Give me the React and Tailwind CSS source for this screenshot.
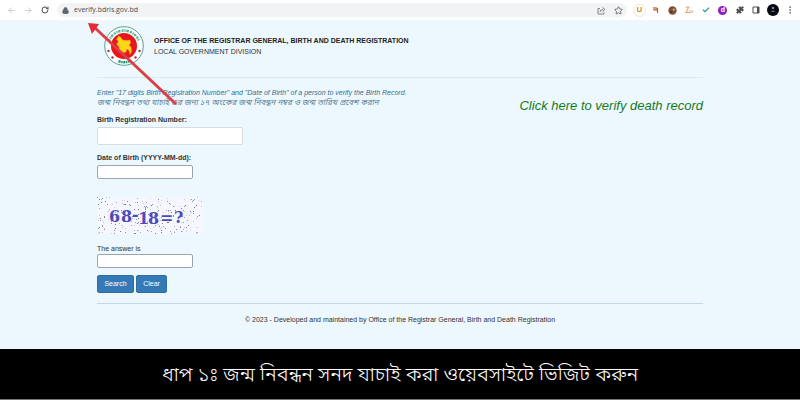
import React from "react";
import { ArrowLeft, ArrowRight, RotateCw, Lock, Star, Puzzle, EllipsisVertical, Check } from "lucide-react";

const specks = Array.from({ length: 230 }, (_, i) => {
  const x = (i * 37 + ((i * i * 13) % 29)) % 105;
  const y = (i * 17 + ((i * i * 7) % 23)) % 37;
  return { x, y, color: ["#8f88c4", "#cdbcd6", "#a5a1b5", "#dcc3d0", "#77718f"][i % 5] };
});

function Extensions() {
  return (
    <div className="grid w-[169px] shrink-0 grid-cols-10 items-center justify-items-center pr-[2px]">
      <button aria-label="Extension U" className="flex size-[13px] items-center justify-center rounded-full border border-[#f6e3d6] bg-white text-[8px] font-bold text-[#d9822b]">U</button>
      <button aria-label="Honey">
        <svg viewBox="0 0 8 8" className="size-2"><path d="M2 1V4H5M4 1V4M5.500 2V7" stroke="#b5632e" strokeWidth="1.200" fill="none" /></svg>
      </button>
      <button aria-label="Cookies">
        <svg viewBox="0 0 10 10" className="size-[9px]"><circle cx="5" cy="5" r="4.600" fill="#7d4f38" /><circle cx="6.500" cy="4" r="1.300" fill="#d4a184" /><circle cx="3.500" cy="6.500" r="1" fill="#4c2d20" /></svg>
      </button>
      <button aria-label="Analytics">
        <svg viewBox="0 0 10 10" className="size-2"><path d="M1 1.500H4.500L1.500 8H5" stroke="#ee9c4a" strokeWidth="1.300" fill="none" /><path d="M6 5V9L9 6V9" stroke="#c7a88c" fill="none" /></svg>
      </button>
      <button aria-label="Checker"><Check className="size-2 text-[#3aa59b]" strokeWidth={4} /></button>
      <button aria-label="Extension d" className="flex size-[9px] items-center justify-center rounded-full bg-[#8b1fc0] text-[7px] font-bold text-white">d</button>
      <button aria-label="Extensions"><Puzzle className="size-2 text-[#4b4f54]" fill="#4b4f54" strokeWidth={2} /></button>
      <button aria-label="Side panel">
        <svg viewBox="0 0 8 8" className="size-2"><path d="M1 1H7V7H1Z" stroke="#4b4f54" fill="none" /><path d="M5 1H7V7H5Z" fill="#4b4f54" /></svg>
      </button>
      <button aria-label="Profile">
        <svg viewBox="0 0 12 12" className="size-3"><circle cx="6" cy="6" r="6" fill="#06080d" /><circle cx="6" cy="4" r="1.300" fill="#7786a4" /><path d="M3.500 8q2.500-3 5 0z" fill="#59677f" /></svg>
      </button>
      <button aria-label="Menu"><EllipsisVertical className="size-[10px] text-[#5f6368]" strokeWidth={2} /></button>
    </div>
  );
}

function BrowserBar() {
  return (
    <header className="flex h-5 items-center bg-white pl-[7px]">
      <nav className="flex w-[50px] shrink-0 items-center gap-2">
        <button aria-label="Back"><ArrowLeft className="size-[9px] text-[#b9bcc0]" /></button>
        <button aria-label="Forward"><ArrowRight className="size-[9px] text-[#b9bcc0]" /></button>
        <button aria-label="Reload"><RotateCw className="size-[8px] text-[#4b4f54]" strokeWidth={3} /></button>
      </nav>
      <div className="mr-1 flex h-[14px] flex-1 items-center rounded-full bg-[#f1f3f4] pr-1 pl-[5px]">
        <Lock className="size-[7px] text-[#5f6368]" fill="#5f6368" strokeWidth={3} />
        <input aria-label="Address" defaultValue="everify.bdris.gov.bd" className="ml-[5px] min-w-0 flex-1 bg-transparent font-['Open_Sans',sans-serif] text-[7px] text-[#4a4e52] outline-none" />
        <button aria-label="Share">
          <svg viewBox="0 0 9 9" className="size-[9px]" fill="none" stroke="#80848a"><path d="M3 2.500H1V8H7V6.500M3 6Q3 3.500 6 3.500M5.500 1.500L8 3.500L5.500 5.500" /></svg>
        </button>
        <button aria-label="Bookmark" className="ml-2"><Star className="size-[9px] text-[#4b4f54]" strokeWidth={2} /></button>
      </div>
      <Extensions />
    </header>
  );
}

function Seal() {
  return (
    <svg viewBox="0 0 40 40" className="size-10" role="img" aria-label="Government seal">
      <circle cx="20" cy="20" r="19.300" fill="#fdfefe" stroke="#5b9f91" strokeWidth="1" />
      <path d="M5 15A16 16 0 0 1 35 15" fill="none" stroke="#5fb39b" strokeWidth="2.400" strokeDasharray="2 .8 1.300 .6 2.600 1.200" />
      <path d="M14.500 35.200q5.500 2 11 0" fill="none" stroke="#199970" strokeWidth="2.400" strokeDasharray="2.200 .6 1.400 .6" />
      <circle cx="20" cy="20" r="13" fill="#e8171d" />
      <path d="M14.500 10l2.500 1.500 1.500 2.500 5 .5 2.500-.5.500 3-1.500 2 2 2 .5 4.500-1.500 3-1-4-2-1.500-1 3-4 1-2.500-2-.5-4-2.500-3 2-2.500-2-2z" fill="#fbd716" stroke="#f5921e" strokeWidth=".5" />
      {[[4.500, 25], [8.500, 31.500], [31.500, 31.500], [35.500, 25]].map(([x, y]) => (
        <circle key={`${x}-${y}`} cx={x} cy={y} r="1.200" fill="#b62b45" />
      ))}
    </svg>
  );
}

function Captcha() {
  return (
    <svg viewBox="0 0 106 37" className="mt-[18px] h-[37px] w-[106px]" role="img" aria-label="68-18=?">
      <rect width="106" height="37" fill="#f4f7fd" />
      {specks.map((s, i) => <rect key={i} x={s.x} y={s.y} width="1" height="1" fill={s.color} />)}
      <g fill="#4f4ab8" fontFamily="DejaVu Serif, serif" fontWeight="700" fontSize="16">
        <text x="12" y="25">6</text>
        <text x="24" y="25">8</text>
        <text x="35" y="23">-</text>
        <text x="41" y="27">1</text>
        <text x="51" y="27">8</text>
        <text x="63" y="26">=</text>
        <text x="77" y="26">?</text>
      </g>
    </svg>
  );
}

function SearchForm() {
  return (
    <form className="flex flex-col items-start" onSubmit={(e) => e.preventDefault()}>
      <label htmlFor="brn" className="mt-[7px] leading-[10px] font-bold">Birth Registration Number:</label>
      <input id="brn" className="mt-[2px] h-[18px] w-[146px] rounded-[2px] border border-[#d5dce2] bg-white px-1" />
      <label htmlFor="dob" className="mt-2 leading-[10px] font-bold">Date of Birth (YYYY-MM-dd):</label>
      <input id="dob" className="mt-[2px] h-[14px] w-24 rounded-[2px] border border-[#9ba5ad] bg-white px-1" />
      <Captcha />
      <label htmlFor="answer" className="mt-[10px] leading-[10px]">The answer is</label>
      <input id="answer" className="h-[14px] w-24 rounded-[2px] border border-[#9ba5ad] bg-white px-1" />
      <div className="mt-[7px] flex gap-[2px]">
        <button type="submit" className="h-[18px] w-[37px] rounded-[2px] border border-[#2e6da4] bg-[#337ab7] text-white">Search</button>
        <button type="reset" className="h-[18px] w-[31px] rounded-[2px] border border-[#2e6da4] bg-[#337ab7] text-white">Clear</button>
      </div>
    </form>
  );
}

export default function App() {
  return (
    <div className="relative flex min-h-screen flex-col bg-[#edf7fe] font-['Liberation_Sans',Arial,sans-serif] text-[7px] text-[#333]">
      <BrowserBar />
      <main className="mx-auto w-full max-w-[606px] flex-1">
        <div className="flex h-[58px] items-start border-b border-[#dce8f2] pt-[6px] pl-[7px]">
          <Seal />
          <div className="pt-[9px] pl-[10px] leading-[11px]">
            <h1 className="font-bold text-[#222]">OFFICE OF THE REGISTRAR GENERAL, BIRTH AND DEATH REGISTRATION</h1>
            <p>LOCAL GOVERNMENT DIVISION</p>
          </div>
        </div>
        <div className="flex justify-between pt-[10px]">
          <div>
            <p className="leading-[10px] text-[#31708f] italic">Enter "17 digits Birth Registration Number" and "Date of Birth" of a person to verify the Birth Record.</p>
            <p className="font-['Noto_Sans_Bengali','Noto_Sans',sans-serif] text-[8px] leading-[10px] text-[#5b7f96] italic">জন্ম নিবন্ধন তথ্য যাচাই এর জন্য ১৭ অংকের জন্ম নিবন্ধন নম্বর ও জন্ম তারিখ প্রবেশ করান</p>
            <SearchForm />
          </div>
          <a href="#death" className="pt-[9px] text-[13px] leading-[18px] text-[#147a1d] italic">Click here to verify death record</a>
        </div>
        <footer className="mt-[10px] border-t border-[#c6d8e6] pt-[11px] text-center leading-[10px]">© 2023 - Developed and maintained by Office of the Registrar General, Birth and Death Registration</footer>
      </main>
      <div className="flex h-[51px] items-center justify-center border-b border-[#777] bg-black pt-1 font-['Noto_Sans_Bengali','Noto_Sans',sans-serif] text-[20px] leading-[32px] font-light text-white">
        <p>ধাপ ১ঃ জন্ম নিবন্ধন সনদ যাচাই করা ওয়েবসাইটে ভিজিট করুন</p>
      </div>
      <svg viewBox="0 0 90 84" className="pointer-events-none absolute top-[22px] left-[88px] h-[84px] w-[90px]" aria-hidden="true">
        <path d="M6 5L88 82" stroke="#dc3f46" strokeWidth="3" />
        <path d="M0 1L11 2L4 12Z" fill="#e32c35" />
      </svg>
    </div>
  );
}
